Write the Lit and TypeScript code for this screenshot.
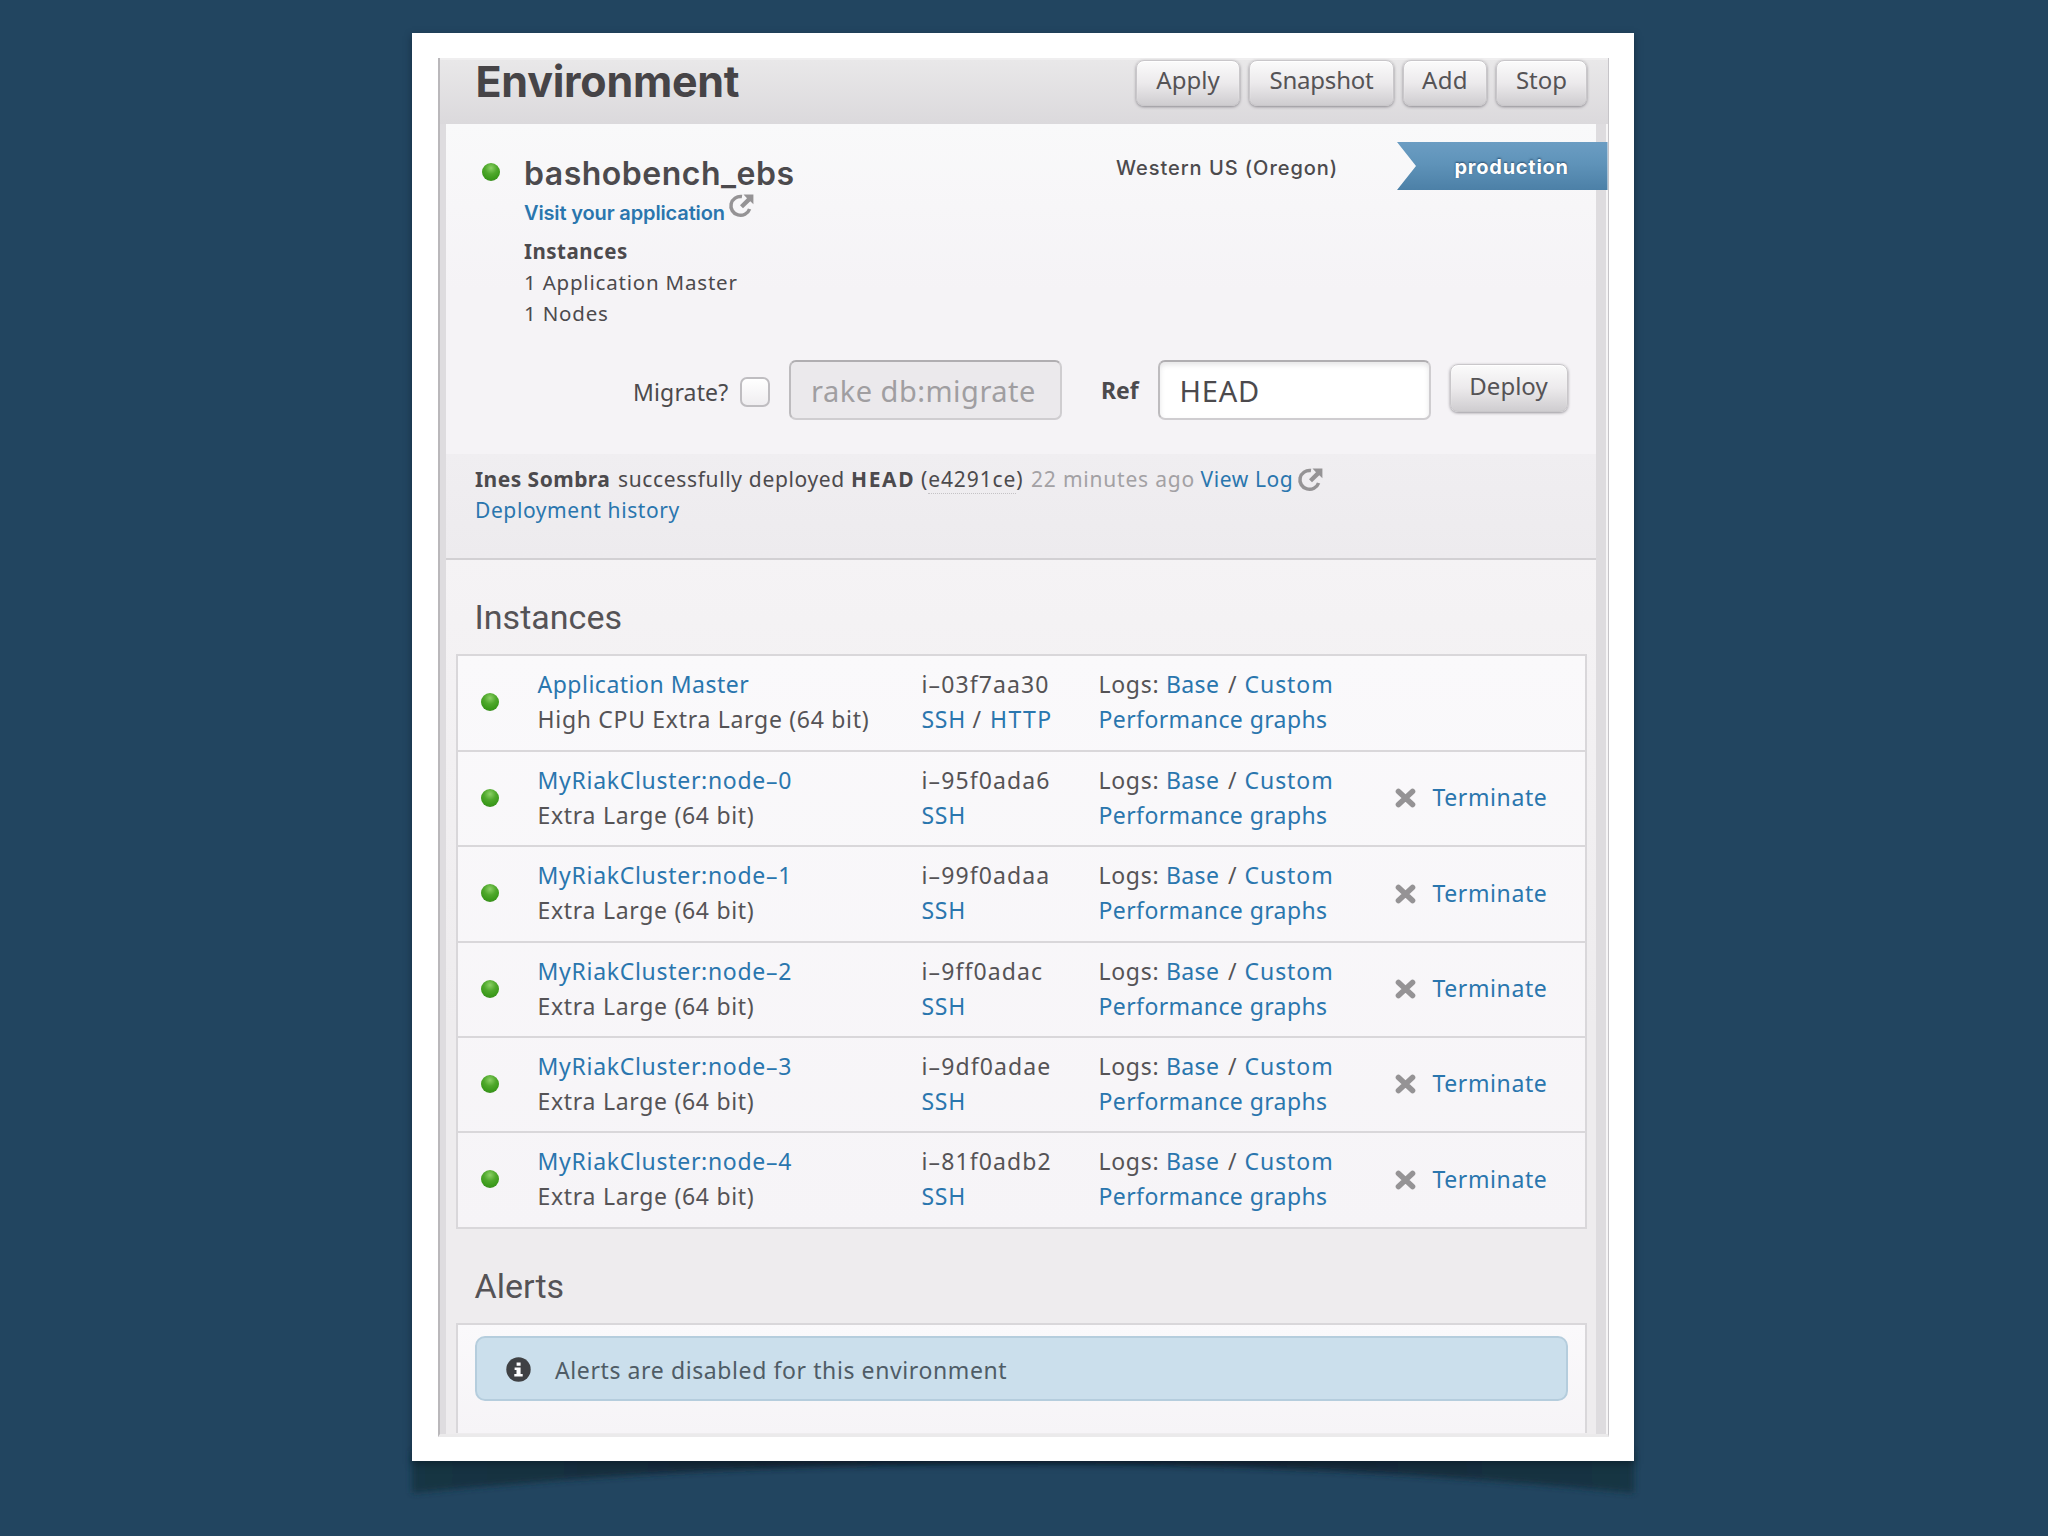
import { LitElement, html, css, svg } from "lit";
import { customElement, property } from "lit/decorators.js";

interface Instance {
  name: string;
  size: string;
  id: string;
  http?: boolean;
  removable: boolean;
}

const INSTANCES: Instance[] = [
  { name: "Application Master", size: "High CPU Extra Large (64 bit)", id: "i–03f7aa30", http: true, removable: false },
  { name: "MyRiakCluster:node–0", size: "Extra Large (64 bit)", id: "i–95f0ada6", removable: true },
  { name: "MyRiakCluster:node–1", size: "Extra Large (64 bit)", id: "i–99f0adaa", removable: true },
  { name: "MyRiakCluster:node–2", size: "Extra Large (64 bit)", id: "i–9ff0adac", removable: true },
  { name: "MyRiakCluster:node–3", size: "Extra Large (64 bit)", id: "i–9df0adae", removable: true },
  { name: "MyRiakCluster:node–4", size: "Extra Large (64 bit)", id: "i–81f0adb2", removable: true },
];

const externalIcon = html`<svg class="ext" width="26" height="24" viewBox="0 0 26 24">
  ${svg`<path d="M14 2.6 A9.6 9.4 0 1 0 21.6 15" fill="none" stroke="#959395" stroke-width="3.5"/>
  <path d="M15.5 0.6 H25.4 V10.2 L22.3 7.2 L15 14.2 L12 11.2 L19 4.2 Z" fill="#959395"/>`}
</svg>`;

@customElement("status-dot")
class StatusDot extends LitElement {
  static styles = css`
    :host {
      display: block;
      flex: none;
      width: 18px;
      height: 18px;
      border-radius: 50%;
      background: radial-gradient(circle at 50% 28%, #8bd065 0, #4fa82c 38%, #3b9a1b 68%, #3c8228 100%);
    }
  `;
  render() {
    return html``;
  }
}

@customElement("instance-row")
class InstanceRow extends LitElement {
  @property({ attribute: false }) item!: Instance;

  static styles = css`
    :host {
      display: grid;
      grid-template-columns: 79.5px 384px 177px 296px 1fr;
      align-items: center;
      box-sizing: border-box;
      height: 95.45px;
      padding-bottom: 1.6px;
      border-bottom: 2px solid #d9d7da;
      font: 23px/35px "Noto Sans", sans-serif;
      letter-spacing: 0.7px;
      color: #555356;
      white-space: nowrap;
    }
    status-dot {
      margin: 0 0 0 23px;
    }
    a {
      color: #2a76ae;
    }
    .line {
      display: flex;
    }
    .master {
      letter-spacing: 0.5px;
    }
    .id {
      letter-spacing: 1.1px;
    }
    .ssh {
      width: 51px;
    }
    .sep {
      width: 17.5px;
    }
    .http {
      letter-spacing: 1.4px;
    }
    .logs {
      width: 67.5px;
    }
    .base {
      width: 62px;
      letter-spacing: 0.35px;
    }
    .slash {
      width: 16.5px;
    }
    .custom {
      letter-spacing: 0.95px;
    }
    .perf {
      letter-spacing: 0.4px;
    }
    .term {
      display: flex;
      align-items: center;
      gap: 17px;
      letter-spacing: 0.6px;
    }
    .term svg {
      margin-top: 1px;
    }
  `;

  render() {
    const i = this.item;
    return html`
      <status-dot></status-dot>
      <div>
        <div class="line"><a class=${i.removable ? "" : "master"}>${i.name}</a></div>
        <div class="line">${i.size}</div>
      </div>
      <div>
        <div class="line id">${i.id}</div>
        <div class="line">
          <a class="ssh">SSH</a>${i.http ? html`<span class="sep">/</span><a class="http">HTTP</a>` : ""}
        </div>
      </div>
      <div>
        <div class="line">
          <span class="logs">Logs:</span><a class="base">Base</a><span class="slash">/</span><a class="custom">Custom</a>
        </div>
        <div class="line"><a class="perf">Performance graphs</a></div>
      </div>
      ${i.removable
        ? html`<div class="term">
            <svg width="21" height="20" viewBox="0 0 21 20">
              <path d="M3.5 3.5 L17.5 16.5 M17.5 3.5 L3.5 16.5" stroke="#959395" stroke-width="5.6" stroke-linecap="round" />
            </svg>
            <a>Terminate</a>
          </div>`
        : ""}
    `;
  }
}

@customElement("app-root")
class AppRoot extends LitElement {
  static styles = css`
    :host {
      display: block;
      box-sizing: border-box;
      width: 2048px;
      height: 1536px;
      padding: 33px 0 0 412px;
      overflow: hidden;
      background: #224560;
      color: #4c4a4d;
      font: 21px/31px "Noto Sans", sans-serif;
      white-space: nowrap;
    }
    .card {
      position: relative;
      width: 1222px;
      height: 1428px;
      box-sizing: border-box;
      padding: 25px 25px 24px 26px;
      background: #fff;
      box-shadow: 0 3px 7px rgba(8, 20, 32, 0.5);
    }
    .curl {
      position: absolute;
      left: -20px;
      top: 1408px;
      z-index: -1;
    }
    .stage {
      position: relative;
      z-index: 0;
    }
    .shot {
      display: flex;
      flex-direction: column;
      box-sizing: border-box;
      height: 1379px;
      border-left: 2px solid #bab8bb;
      border-right: 1px solid #c6c4c8;
      border-bottom: 3px solid #ebeaeb;
      background: #dedcdf;
      box-shadow: inset -2px 0 #f6f5f6;
    }
    .head {
      display: flex;
      flex: none;
      justify-content: space-between;
      box-sizing: border-box;
      height: 66px;
      padding: 0 21px 0 35.5px;
      background: linear-gradient(#e9e8e9, #dbd9dc);
      border-top: 2px solid #efeeef;
    }
    h1 {
      margin: 0;
      font: bold 43px/43px Inter, sans-serif;
      letter-spacing: -0.25px;
      color: #464447;
    }
    .buttons {
      display: flex;
      gap: 9px;
    }
    .btn {
      box-sizing: border-box;
      flex: none;
      height: 46px;
      border: 1px solid #c9c7ca;
      border-radius: 8px;
      background: linear-gradient(#fbfbfb, #eceaec 50%, #cfcdd0);
      box-shadow: 0 1px 3px rgba(70, 66, 74, 0.55), inset 0 1px 1px #fff;
      color: #555356;
      font-size: 24px;
      line-height: 38px;
      text-align: center;
    }
    .apply { width: 104px; }
    .snap { width: 145px; letter-spacing: -0.2px; }
    .add { width: 84px; letter-spacing: 0.4px; }
    .stop { width: 91px; }
    .deploy {
      width: 118px;
      height: 48px;
      margin: 4px 0 0 19px;
      line-height: 42px;
    }
    .body {
      flex: 1;
      min-height: 0;
      margin: 0 12px 0 6px;
      background: linear-gradient(#f5f3f5 430px, #eeecee 900px);
    }
    .env {
      display: flex;
      flex-direction: column;
      box-sizing: border-box;
      height: 330px;
      background: linear-gradient(#f9f9fa, #f5f3f6 50%);
    }
    .summary {
      display: flex;
      height: 204px;
      box-sizing: border-box;
      padding-top: 30px;
    }
    .summary status-dot {
      margin: 9px 24px 0 36px;
    }
    .info {
      flex: none;
      width: 592px;
      font-size: 20.5px;
      letter-spacing: 0.8px;
    }
    h2 {
      margin: 0 0 4px;
      font: 600 32px/40px Inter, sans-serif;
      letter-spacing: 0.5px;
    }
    a {
      color: #2a76ae;
    }
    .visit {
      display: flex;
      height: 30px;
      margin-bottom: 8px;
      font: 600 20px/30px Inter, sans-serif;
      letter-spacing: -0.14px;
    }
    .visit .ext {
      margin: -4px 0 0 3px;
    }
    .info b {
      display: block;
      letter-spacing: 0.5px;
    }
    .region {
      flex: none;
      width: 281px;
      margin-top: -2px;
      font: 500 20px/32px Inter, sans-serif;
      letter-spacing: 0.95px;
    }
    .ribbon {
      box-sizing: border-box;
      width: 210.5px;
      height: 48px;
      flex: none;
      margin-top: -12px;
      padding-left: 57.5px;
      background: linear-gradient(#6b9dc3, #5f93b9 45%, #4c80a7);
      clip-path: polygon(0 0, 100% 0, 100% 100%, 0 100%, 19px 50%);
      color: #fff;
      font: bold 20px/51px Inter, sans-serif;
      letter-spacing: 0.75px;
      text-shadow: 0 -1px 2px rgba(20, 50, 80, 0.75);
    }
    .form {
      display: flex;
      padding: 32px 0 0 187px;
      line-height: 46px;
      font-size: 23px;
    }
    .form .label {
      padding-top: 9px;
      width: 107px;
      letter-spacing: 0.15px;
    }
    .check {
      box-sizing: border-box;
      width: 30px;
      height: 30px;
      margin: 17px 19px 0 0;
      border: 2px solid #bfbdc1;
      border-radius: 7px;
      background: linear-gradient(#fff, #efedf0);
    }
    .field {
      box-sizing: border-box;
      width: 273px;
      height: 60px;
      padding-left: 20px;
      border: 2px solid #cfcdd0;
      border-top-color: #b0aeb1;
      border-left-color: #bdbbbe;
      border-radius: 7px;
      background: #fff;
      box-shadow: inset 0 3px 5px rgba(80, 76, 84, 0.14);
      font-size: 29px;
      line-height: 57px;
      letter-spacing: 0.8px;
    }
    .off {
      background: #ebe9ec;
      color: #a09ea1;
      box-shadow: none;
      letter-spacing: 0.5px;
    }
    .ref {
      width: 56.5px;
      padding: 7px 0 0 39px;
      font-weight: bold;
    }
    .strip {
      box-sizing: border-box;
      height: 106px;
      padding: 10px 0 0 29px;
      border-bottom: 2px solid #d2d0d3;
      background: linear-gradient(#f0eef1, #edebee);
      letter-spacing: 0.6px;
    }
    .strip div {
      display: flex;
    }
    .who { width: 143px; font-weight: bold; letter-spacing: 0.45px; }
    .what { width: 233px; letter-spacing: 0.65px; }
    .rev { width: 70px; font-weight: bold; letter-spacing: 1.6px; }
    .sha { width: 110px; letter-spacing: 0.9px; }
    .sha span { border-bottom: 1px dotted #c4c2c5; }
    .when { width: 169.5px; color: #a3a1a4; letter-spacing: 0.8px; }
    .strip .ext { margin: 4px 0 0 3.5px; }
    h3 {
      margin: 0;
      padding: 37.3px 0 17px 28.5px;
      font: 400 34px/40px Roboto, sans-serif;
      letter-spacing: 0.02px;
      color: #555356;
    }
    .table {
      display: block;
      margin: 0 9px 0 10px;
      border: 2px solid #d9d7da;
      border-bottom: 0;
      background: linear-gradient(#faf9fb, #f6f4f7);
    }
    .alerts {
      box-sizing: border-box;
      height: 110px;
      padding: 11px 17px 0 17px;
    }
    .notice {
      display: flex;
      align-items: center;
      box-sizing: border-box;
      height: 65px;
      padding-left: 28.5px;
      gap: 24.5px;
      border: 2px solid #b5cddd;
      border-radius: 10px;
      background: #cbdfec;
      color: #4f5c66;
      font-size: 23px;
      letter-spacing: 0.6px;
    }
    .notice span {
      padding-top: 3px;
    }
    .notice svg {
      margin-top: 1px;
    }
  `;

  render() {
    return html`<div class="stage">
      <svg class="curl" width="1262" height="80" viewBox="0 0 1262 80">
        <defs>
          <filter id="soft" x="-5%" y="-60%" width="110%" height="220%"><feGaussianBlur stdDeviation="3" /></filter>
          <linearGradient id="shade">
            <stop offset="0" stop-color="#193544" />
            <stop offset="0.5" stop-color="#0f1f30" />
            <stop offset="1" stop-color="#193544" />
          </linearGradient>
        </defs>
        <path d="M20 10 V52 Q330 22 631 22 T1242 52 V10 Z" fill="url(#shade)" filter="url(#soft)" />
      </svg>
      <div class="card">
        <div class="shot">
          <div class="head">
            <h1>Environment</h1>
            <div class="buttons">
              <div class="btn apply">Apply</div>
              <div class="btn snap">Snapshot</div>
              <div class="btn add">Add</div>
              <div class="btn stop">Stop</div>
            </div>
          </div>
          <div class="body">
            <div class="env">
              <div class="summary">
                <status-dot></status-dot>
                <div class="info">
                  <h2>bashobench_ebs</h2>
                  <div class="visit"><a>Visit your application</a>${externalIcon}</div>
                  <b>Instances</b>
                  <div>1 Application Master</div>
                  <div>1 Nodes</div>
                </div>
                <div class="region">Western US (Oregon)</div>
                <div class="ribbon">production</div>
              </div>
              <div class="form">
                <div class="label">Migrate?</div>
                <div class="check"></div>
                <div class="field off">rake db:migrate</div>
                <div class="ref">Ref</div>
                <div class="field">HEAD</div>
                <div class="btn deploy">Deploy</div>
              </div>
            </div>
            <div class="strip">
              <div>
                <span class="who">Ines Sombra</span><span class="what">successfully deployed</span
                ><span class="rev">HEAD</span><span class="sha">(<span>e4291ce</span>)</span
                ><span class="when">22 minutes ago</span><a>View Log</a>${externalIcon}
              </div>
              <div><a>Deployment history</a></div>
            </div>
            <h3>Instances</h3>
            <div class="table">${INSTANCES.map((i) => html`<instance-row .item=${i}></instance-row>`)}</div>
            <h3>Alerts</h3>
            <div class="table alerts">
              <div class="notice">
                <svg width="25" height="25" viewBox="0 0 25 25">
                  <circle cx="12.5" cy="12.5" r="12.2" fill="#3f4144" />
                  <path d="M10.6 5.5 h4 v3.2 h-4 Z M8.6 10.4 h6 v6.6 h2.1 v2.6 h-8.4 v-2.6 h2.2 v-4 h-1.9 Z" fill="#fff" />
                </svg>
                <span>Alerts are disabled for this environment</span>
              </div>
            </div>
          </div>
        </div>
      </div>
    </div>`;
  }
}
